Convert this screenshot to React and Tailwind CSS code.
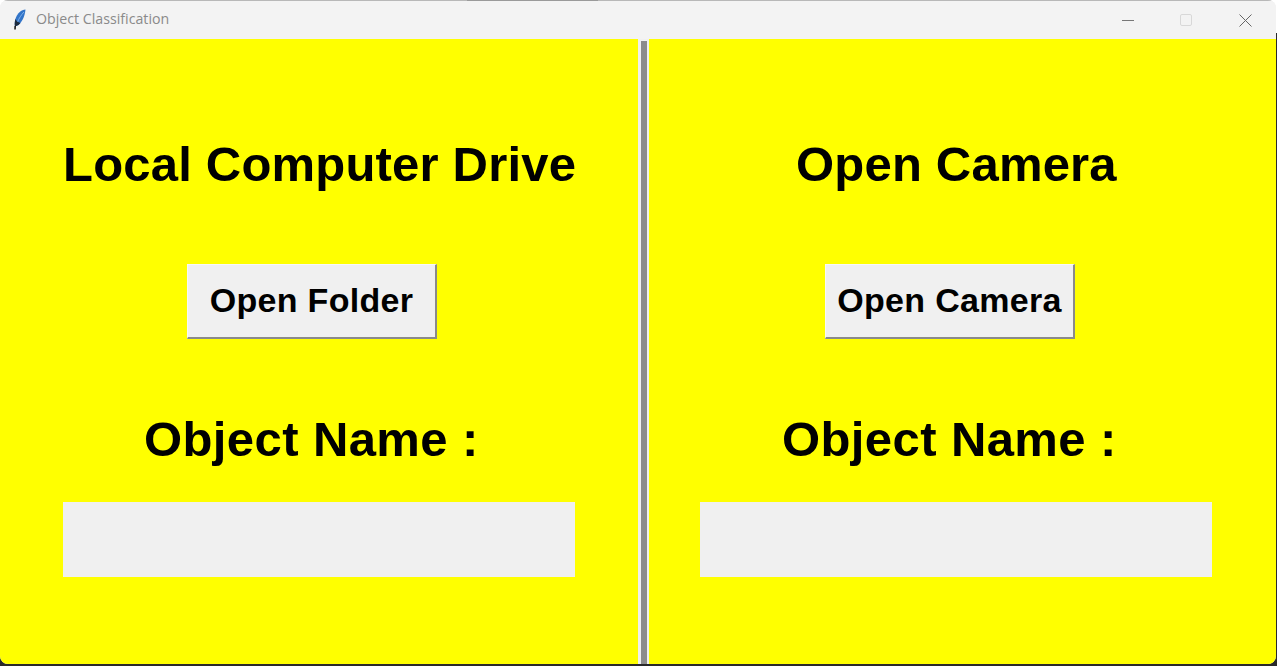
function Feather() {
  return (
    <svg width="16" height="22" viewBox="0 0 16 22" className="shrink-0">
      <path d="M13.5 0.5 C9.5 0.5 5 4.5 3.4 10 C2.6 13 2.6 15.5 3 17.5 L6.5 16 C10 13 12.8 7.5 13.5 0.5 Z" fill="#3274c8" />
      <path d="M12 3 C9 6 7 9.5 5.5 13" stroke="#7fb0ea" strokeWidth="1" fill="none" />
      <path d="M3.4 10 C2.6 13 2.6 15.5 3 17.5 L6.5 16 C7.2 15.4 7.8 14.8 8.4 14 L5 12.5 Z" fill="#1d2a3d" />
      <path d="M3.2 17 L3 20.5" stroke="#1a1a1a" strokeWidth="1.6" fill="none" />
    </svg>
  );
}

function Panel({ title, titleMl, button, buttonMl, nameMl, entryMl, width }) {
  return (
    <div className={`flex h-full flex-col bg-[#ffff00] ${width}`}>
      <h1 className={`mt-[94px] h-[62px] whitespace-nowrap text-[49px] font-bold leading-[62px] tracking-[0.2px] text-black ${titleMl}`}>{title}</h1>
      <button className={`mt-[69px] flex h-[75px] w-[250px] items-center justify-center border border-b-2 border-r-2 border-b-[#8a8a8a] border-l-[#f8f8f8] border-r-[#8a8a8a] border-t-[#f8f8f8] bg-[#f0f0f0] pb-[2px] text-[34px] font-bold tracking-[0.3px] text-black ${buttonMl}`}>{button}</button>
      <div className={`mt-[69px] h-[62px] whitespace-nowrap text-[49px] font-bold leading-[62px] tracking-[0.4px] text-black ${nameMl}`}>Object Name :</div>
      <div className={`mt-[32px] h-[75px] w-[512px] bg-[#f0f0f0] ${entryMl}`} />
    </div>
  );
}

export default function App() {
  return (
    <div className="relative h-[666px] w-[1277px] overflow-hidden bg-[linear-gradient(to_bottom,#ffffff_33px,#2a2a2a_33px)] font-['Liberation_Sans',Arial,sans-serif]">
      <div className="flex h-[664px] w-[1276px] flex-col overflow-hidden rounded-[8px] bg-[#f0f0f0]">
        <header className="flex h-[39px] shrink-0 items-center border-t border-[#b8b8b8] bg-[#f3f3f3]">
          <span className="ml-[12px] flex w-[24px]"><Feather /></span>
          <span className="mb-[2px] text-[14.2px] text-[#8a8a8a] font-['Open_Sans',sans-serif]">Object Classification</span>
          <div className="ml-auto flex items-center">
            <svg width="12" height="12" viewBox="0 0 12 12" className="mr-[46px]"><path d="M0 6.5H12" stroke="#777" strokeWidth="1" /></svg>
            <svg width="12" height="12" viewBox="0 0 12 12" className="mr-[47px]"><rect x="0.5" y="0.5" width="11" height="11" rx="1.5" fill="none" stroke="#d8d8d8" /></svg>
            <svg width="13" height="13" viewBox="0 0 13 13" className="mr-[24px]"><path d="M0.5 0.5L12.5 12.5M12.5 0.5L0.5 12.5" stroke="#666" strokeWidth="1" /></svg>
          </div>
        </header>
        <main className="flex min-h-0 flex-1">
          <Panel width="w-[638px]" title="Local Computer Drive" titleMl="ml-[63px]" button="Open Folder" buttonMl="ml-[187px]" nameMl="ml-[144px]" entryMl="ml-[63px]" />
          <div className="flex h-full w-[11px] shrink-0 justify-center bg-[#f0f0f0]">
            <div className="mt-[2px] h-full w-[6px] bg-[#8c8c8c]" />
          </div>
          <Panel width="flex-1" title="Open Camera" titleMl="ml-[147px]" button="Open Camera" buttonMl="ml-[176px]" nameMl="ml-[133px]" entryMl="ml-[51px]" />
        </main>
      </div>
      <div className="absolute left-[467px] top-0 h-px w-[131px] bg-[#9a9a9a]" />
    </div>
  );
}
